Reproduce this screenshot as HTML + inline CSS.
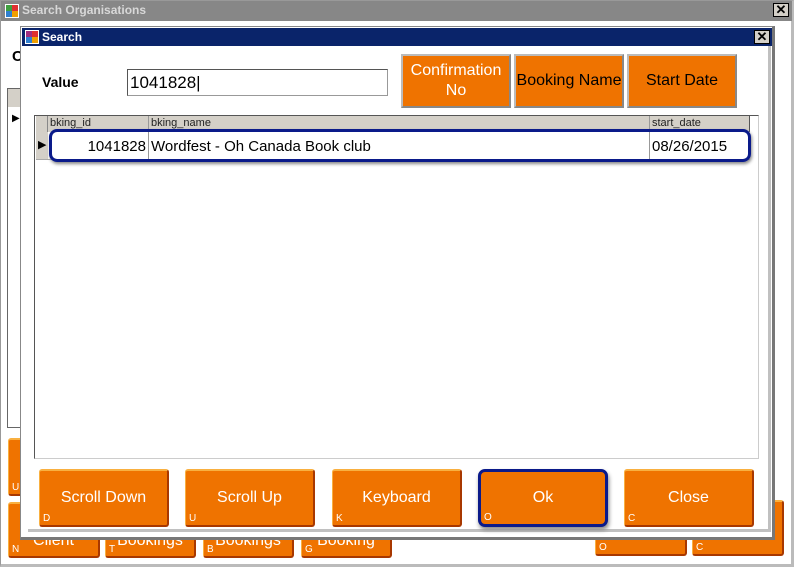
<!DOCTYPE html>
<html><head><style>
*{margin:0;padding:0;box-sizing:border-box}
body{width:796px;height:569px;background:#fff;position:relative;overflow:hidden;font-family:"Liberation Sans",Arial,sans-serif}
.a{position:absolute}
.ob{background:#ef7300;border-top:2px solid #f9b040;border-left:1px solid #f9b040;border-right:2px solid #a83800;border-bottom:2px solid #a83800;border-radius:3px;color:#fff;font-size:16px}
.k{position:absolute;left:3px;bottom:1px;font-size:10px;color:#fff}
.bt{display:flex;align-items:center;justify-content:center}
.hb{background:#ef7300;border:2px solid #888;border-top-color:#bbb;border-left-color:#bbb;display:flex;align-items:center;justify-content:center;text-align:center;font-size:16px;line-height:20px}
.x{background:#d4d0c8;border:1px solid #000;width:16px;height:14px;font-size:13px;line-height:11px;text-align:center;color:#000;font-weight:bold}
</style></head><body>
<!-- outer window -->
<div class="a" style="left:0;top:0;width:794px;height:567px;border:1px solid #999;border-right:3px solid #bbb;border-bottom:3px solid #bbb;background:#fff"></div>
<div class="a" style="left:1px;top:1px;width:791px;height:20px;background:#878787"></div>
<div class="a" style="left:5px;top:4px;width:14px;height:14px;background:conic-gradient(#e03030 0 25%,#f0a000 0 50%,#3080d0 0 75%,#40a040 0);border:1px solid #fff"></div>
<div class="a" style="left:22px;top:3px;color:#d8d8d8;font-size:12px;font-weight:bold">Search Organisations</div>
<div class="a x" style="left:773px;top:3px">✕</div>
<div class="a" style="left:12px;top:48px;font-size:15px;font-weight:bold">C</div>
<div class="a" style="left:7px;top:88px;width:14px;height:340px;border:1px solid #666;border-right:none;background:#fff"></div>
<div class="a" style="left:8px;top:89px;width:13px;height:18px;background:#d4d0c8"></div>
<div class="a" style="left:12px;top:113px;font-size:10px">▶</div>
<div class="a ob" style="left:8px;top:438px;width:20px;height:58px"><span class="k">U</span></div>
<div class="a ob bt" style="left:8px;top:502px;width:92px;height:56px;align-items:flex-start;padding-top:28px">Client<span class="k">N</span></div>
<div class="a ob bt" style="left:105px;top:502px;width:91px;height:56px;align-items:flex-start;padding-top:28px">Bookings<span class="k">T</span></div>
<div class="a ob bt" style="left:203px;top:502px;width:91px;height:56px;align-items:flex-start;padding-top:28px">Bookings<span class="k">B</span></div>
<div class="a ob bt" style="left:301px;top:502px;width:91px;height:56px;align-items:flex-start;padding-top:28px">Booking<span class="k">G</span></div>
<div class="a ob" style="left:595px;top:500px;width:92px;height:56px"><span class="k">O</span></div>
<div class="a ob" style="left:692px;top:500px;width:92px;height:56px"><span class="k">C</span></div>
<!-- dialog -->
<div class="a" style="left:20px;top:26px;width:755px;height:514px;background:#fff;border:1px solid #888;border-right:3px solid #777;border-bottom:3px solid #777"></div>
<div class="a" style="left:28px;top:46px;width:743px;height:486px;border-right:3px solid #c0c0c0;border-bottom:3px solid #c0c0c0"></div>
<div class="a" style="left:22px;top:28px;width:750px;height:18px;background:#0a246a"></div>
<div class="a" style="left:25px;top:30px;width:14px;height:14px;background:conic-gradient(#e03030 0 25%,#f0a000 0 50%,#3080d0 0 75%,#a03080 0);border:1px solid #fff"></div>
<div class="a" style="left:42px;top:30px;color:#fff;font-size:12px;font-weight:bold">Search</div>
<div class="a x" style="left:754px;top:30px">✕</div>
<div class="a" style="left:42px;top:74px;font-size:14px;font-weight:bold">Value</div>
<div class="a" style="left:127px;top:69px;width:261px;height:27px;border:1px solid #999;border-top-color:#555;border-left-color:#555;font-size:17px;padding:3px 2px">1041828|</div>
<div class="a hb" style="left:401px;top:54px;width:110px;height:54px;color:#fff">Confirmation<br>No</div>
<div class="a hb" style="left:514px;top:54px;width:110px;height:54px;color:#000">Booking Name</div>
<div class="a hb" style="left:627px;top:54px;width:110px;height:54px;color:#000">Start Date</div>
<!-- grid -->
<div class="a" style="left:34px;top:115px;width:725px;height:344px;border:1px solid #555;border-right-color:#ccc;border-bottom-color:#ccc;background:#fff"></div>
<div class="a" style="left:36px;top:116px;width:714px;height:16px;background:#d4d0c8"></div>
<div class="a" style="left:47px;top:116px;width:1px;height:44px;background:#888"></div>
<div class="a" style="left:148px;top:116px;width:1px;height:44px;background:#999"></div>
<div class="a" style="left:649px;top:116px;width:1px;height:44px;background:#999"></div>
<div class="a" style="left:749px;top:116px;width:1px;height:16px;background:#555"></div>
<div class="a" style="left:36px;top:132px;width:12px;height:28px;background:#d4d0c8"></div>
<div class="a" style="left:50px;top:117px;font-size:11px;color:#222">bking_id</div>
<div class="a" style="left:151px;top:117px;font-size:11px;color:#222">bking_name</div>
<div class="a" style="left:652px;top:117px;font-size:11px;color:#222">start_date</div>
<div class="a" style="left:36px;top:159px;width:714px;height:1px;background:#aaa"></div>
<div class="a" style="left:38px;top:138px;font-size:11px">▶</div>
<div class="a" style="left:48px;top:138px;width:98px;text-align:right;font-size:15px">1041828</div>
<div class="a" style="left:151px;top:138px;font-size:15px">Wordfest - Oh Canada Book club</div>
<div class="a" style="left:652px;top:138px;font-size:15px">08/26/2015</div>
<div class="a" style="left:49px;top:129px;width:702px;height:33px;border:3px solid #0a1a8a;border-radius:8px;box-shadow:1px 2px 3px #888"></div>
<!-- bottom buttons -->
<div class="a ob bt" style="left:39px;top:469px;width:130px;height:58px">Scroll Down<span class="k">D</span></div>
<div class="a ob bt" style="left:185px;top:469px;width:130px;height:58px">Scroll Up<span class="k">U</span></div>
<div class="a ob bt" style="left:332px;top:469px;width:130px;height:58px">Keyboard<span class="k">K</span></div>
<div class="a ob bt" style="left:478px;top:469px;width:130px;height:58px;border:3px solid #0a1a8a;border-radius:7px;box-shadow:1px 3px 4px #888">Ok<span class="k">O</span></div>
<div class="a ob bt" style="left:624px;top:469px;width:130px;height:58px">Close<span class="k">C</span></div>
</body></html>
